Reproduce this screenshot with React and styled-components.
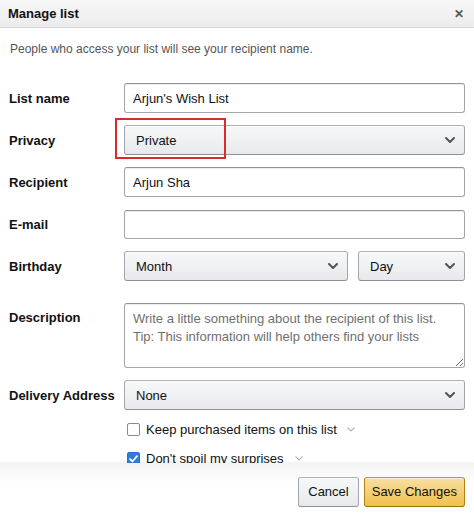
import styled, { createGlobalStyle } from "styled-components";

const GlobalStyle = createGlobalStyle`
  body {
    margin: 0;
    background: #ffffff;
    font-family: "Liberation Sans", Arial, sans-serif;
    color: #111;
  }
`;

const Modal = styled.div`
  width: 474px;
  height: 520px;
  display: flex;
  flex-direction: column;
  background: #fff;
  overflow: hidden;
`;

const Header = styled.div`
  height: 28px;
  flex-shrink: 0;
  display: flex;
  align-items: center;
  justify-content: space-between;
  padding: 0 10px 0 8px;
  background: linear-gradient(to bottom, #f7f7f7, #ececec);
  border-bottom: 1px solid #d6d6d6;
  box-sizing: border-box;
`;

const Title = styled.h2`
  margin: 0;
  font-size: 13px;
  font-weight: 700;
  color: #111;
`;

const Close = styled.span`
  font-size: 12px;
  font-weight: 700;
  color: #555;
  line-height: 1;
`;

const Body = styled.div`
  flex: 1;
  overflow: hidden;
  padding: 14px 9px 0 9px;
`;

const Note = styled.p`
  margin: 0 0 27px 1px;
  font-size: 12px;
  color: #555;
`;

const Form = styled.div`
  display: grid;
  grid-template-columns: 115px 1fr;
  row-gap: 12px;
`;

const Label = styled.label`
  font-size: 13px;
  font-weight: 700;
  color: #111;
  padding-top: ${(p) => (p.$top ? "6px" : "8px")};
  margin-top: ${(p) => p.$extra || 0};
`;

const Field = styled.div`
  display: flex;
  gap: 10px;
  margin-top: ${(p) => p.$extra || 0};
  position: relative;
`;

const TextInput = styled.input`
  width: 100%;
  height: ${(p) => p.$h || 30}px;
  box-sizing: border-box;
  border: 1px solid #a6a6a6;
  border-top-color: #949494;
  border-radius: 3px;
  box-shadow: 0 1px 0 rgba(255, 255, 255, 0.5), inset 0 1px 0 rgba(0, 0, 0, 0.07);
  padding: 0 8px;
  font-family: inherit;
  font-size: 13px;
  color: #111;
  outline: none;
`;

const TextArea = styled.textarea`
  width: 100%;
  height: 65px;
  box-sizing: border-box;
  border: 1px solid #a6a6a6;
  border-top-color: #949494;
  border-radius: 3px;
  box-shadow: inset 0 1px 0 rgba(0, 0, 0, 0.07);
  padding: 6px 8px;
  font-family: inherit;
  font-size: 13px;
  line-height: 18px;
  outline: none;
  &::placeholder {
    color: #6f6f6f;
  }
`;

const Select = styled.div`
  flex: ${(p) => (p.$w ? `0 0 ${p.$w}px` : "1")};
  height: 30px;
  box-sizing: border-box;
  display: flex;
  align-items: center;
  justify-content: space-between;
  padding: 0 9px 0 11px;
  border: 1px solid #adb1b8;
  border-color: #adb1b8 #a2a6ac #8d9096;
  border-radius: 3px;
  background: linear-gradient(to bottom, #f7f8fa, #e7e9ec);
  box-shadow: inset 0 1px 0 rgba(255, 255, 255, 0.6);
  font-size: 13px;
  color: #111;
`;

const Annotation = styled.div`
  position: absolute;
  left: -9px;
  top: -7px;
  width: 111px;
  height: 41px;
  box-sizing: border-box;
  border: 2px solid #d62c2c;
  pointer-events: none;
`;

const Checks = styled.div`
  grid-column: 2;
  display: flex;
  flex-direction: column;
  gap: 14px;
  padding: 0 0 0 3px;
`;

const CheckRow = styled.label`
  display: flex;
  align-items: center;
  gap: 6px;
  font-size: 13px;
  color: #111;
`;

const Box = styled.span`
  width: 13px;
  height: 13px;
  box-sizing: border-box;
  border-radius: 2px;
  border: 1px solid ${(p) => (p.$on ? "#2f6fd0" : "#8a8a8a")};
  background: ${(p) => (p.$on ? "#2f7ce0" : "#fff")};
  display: flex;
  align-items: center;
  justify-content: center;
`;

const Hint = styled.span`
  margin-left: ${(p) => p.$gap || 4}px;
  display: flex;
`;

const Footer = styled.div`
  height: 57px;
  flex-shrink: 0;
  display: flex;
  justify-content: flex-end;
  align-items: center;
  gap: 5px;
  padding: 0 9px;
  background: linear-gradient(to bottom, #f3f3f3, #ffffff 35%);
  box-shadow: 0 -1px 3px rgba(0, 0, 0, 0.06);
  position: relative;
`;

const Button = styled.button`
  height: 30px;
  padding: 0 ${(p) => (p.$primary ? 7 : 9)}px;
  border-radius: 3px;
  border: 1px solid;
  border-color: ${(p) =>
    p.$primary ? "#c89411 #b0820f #99710d" : "#adb1b8 #a2a6ac #8d9096"};
  background: ${(p) =>
    p.$primary
      ? "linear-gradient(to bottom, #f7dfa5, #f0c14b)"
      : "linear-gradient(to bottom, #f7f8fa, #e7e9ec)"};
  box-shadow: inset 0 1px 0 rgba(255, 255, 255, 0.6);
  font-family: inherit;
  font-size: 13px;
  color: #111;
`;

function Chevron({ size = 10, color = "#555", width = 2 }) {
  return (
    <svg width={size} height={size * 0.65} viewBox="0 0 10 6.5">
      <path
        d="M1 1l4 4 4-4"
        fill="none"
        stroke={color}
        strokeWidth={width}
        strokeLinecap="round"
        strokeLinejoin="round"
      />
    </svg>
  );
}

function Tick() {
  return (
    <svg width="9" height="8" viewBox="0 0 9 8">
      <path
        d="M1 4.2l2.4 2.3L8 1.2"
        fill="none"
        stroke="#fff"
        strokeWidth="1.8"
        strokeLinecap="round"
        strokeLinejoin="round"
      />
    </svg>
  );
}

export default function App() {
  return (
    <>
      <GlobalStyle />
      <Modal>
        <Header>
          <Title>Manage list</Title>
          <Close>✕</Close>
        </Header>
        <Body>
          <Note>People who access your list will see your recipient name.</Note>
          <Form>
            <Label>List name</Label>
            <Field>
              <TextInput defaultValue="Arjun's Wish List" />
            </Field>

            <Label>Privacy</Label>
            <Field>
              <Select>
                Private
                <Chevron />
              </Select>
              <Annotation />
            </Field>

            <Label>Recipient</Label>
            <Field>
              <TextInput defaultValue="Arjun Sha" />
            </Field>

            <Label>E-mail</Label>
            <Field $extra="1px">
              <TextInput $h={29} />
            </Field>

            <Label>Birthday</Label>
            <Field>
              <Select>
                Month
                <Chevron />
              </Select>
              <Select $w={107}>
                Day
                <Chevron />
              </Select>
            </Field>

            <Label $top $extra="11px">Description</Label>
            <Field $extra="10px">
              <TextArea
                placeholder={
                  "Write a little something about the recipient of this list.\nTip: This information will help others find your lists"
                }
              />
            </Field>

            <Label>Delivery Address</Label>
            <Field>
              <Select>
                None
                <Chevron />
              </Select>
            </Field>

            <Checks>
              <CheckRow>
                <Box />
                Keep purchased items on this list
                <Hint>
                  <Chevron size={8} color="#aaa" width={1.3} />
                </Hint>
              </CheckRow>
              <CheckRow>
                <Box $on>
                  <Tick />
                </Box>
                Don't spoil my surprises
                <Hint $gap={5}>
                  <Chevron size={8} color="#aaa" width={1.3} />
                </Hint>
              </CheckRow>
            </Checks>
          </Form>
        </Body>
        <Footer>
          <Button>Cancel</Button>
          <Button $primary>Save Changes</Button>
        </Footer>
      </Modal>
    </>
  );
}
